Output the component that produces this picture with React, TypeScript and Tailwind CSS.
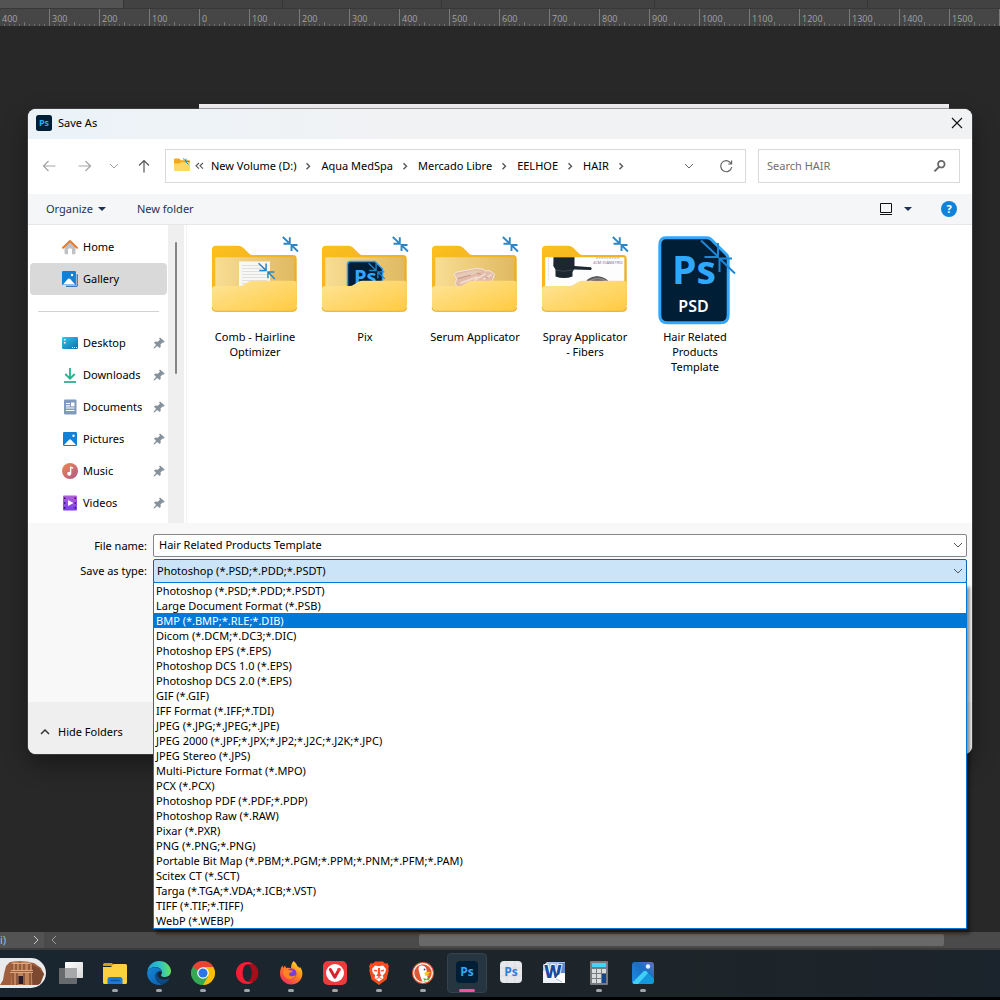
import React from "react";

const fileTypes = [
  "Photoshop (*.PSD;*.PDD;*.PSDT)",
  "Large Document Format (*.PSB)",
  "BMP (*.BMP;*.RLE;*.DIB)",
  "Dicom (*.DCM;*.DC3;*.DIC)",
  "Photoshop EPS (*.EPS)",
  "Photoshop DCS 1.0 (*.EPS)",
  "Photoshop DCS 2.0 (*.EPS)",
  "GIF (*.GIF)",
  "IFF Format (*.IFF;*.TDI)",
  "JPEG (*.JPG;*.JPEG;*.JPE)",
  "JPEG 2000 (*.JPF;*.JPX;*.JP2;*.J2C;*.J2K;*.JPC)",
  "JPEG Stereo (*.JPS)",
  "Multi-Picture Format (*.MPO)",
  "PCX (*.PCX)",
  "Photoshop PDF (*.PDF;*.PDP)",
  "Photoshop Raw (*.RAW)",
  "Pixar (*.PXR)",
  "PNG (*.PNG;*.PNG)",
  "Portable Bit Map (*.PBM;*.PGM;*.PPM;*.PNM;*.PFM;*.PAM)",
  "Scitex CT (*.SCT)",
  "Targa (*.TGA;*.VDA;*.ICB;*.VST)",
  "TIFF (*.TIF;*.TIFF)",
  "WebP (*.WEBP)",
];

const rulerLabels = [
  "400", "300", "200", "100", "0", "100", "200", "300", "400", "500", "600",
  "700", "800", "900", "1000", "1100", "1200", "1300", "1400", "1500", "",
];

const rulerTicks = [0, 1, 2, 3, 4, 5, 6, 7, 8, 9];

function Ruler() {
  return (
    <div className="-ml-px flex h-[17px] overflow-hidden bg-[#464646]">
      {rulerLabels.map((label, i) => (
        <div key={i} className="relative flex w-[50px] shrink-0 items-end border-l border-[#7a7a7a]">
          <span className="absolute top-[3px] left-[2px] font-['Open_Sans'] text-[9px] leading-[14px] text-[#a3a3a3]">
            {label}
          </span>
          {rulerTicks.map((t) => (
            <i
              key={t}
              className={
                t === 4
                  ? "ml-1 block h-1 w-px bg-[#757575]"
                  : t === 9
                    ? "hidden"
                    : "ml-1 block h-[2px] w-px bg-[#6c6c6c]"
              }
            />
          ))}
        </div>
      ))}
    </div>
  );
}

function Chevron({ className }: { className: string }) {
  return (
    <svg viewBox="0 0 10 10" className={className} fill="none" stroke="currentColor" aria-hidden="true">
      <path d="M1 3l4 4 4-4" />
    </svg>
  );
}

function Crumb({ children }: { children: string }) {
  return (
    <>
      <button type="button" className="whitespace-nowrap">
        {children}
      </button>
      <svg viewBox="0 0 25 12" className="h-3 w-[25px] shrink-0" fill="none" stroke="#555" strokeWidth="1.4" aria-hidden="true">
        <path d="M10.500 3.200l3 3-3 3" />
      </svg>
    </>
  );
}

function ShrinkArrows({ x, y, s, w = 1.8 }: { x: number; y: number; s: number; w?: number }) {
  return (
    <g transform={`translate(${x} ${y}) scale(${s})`} fill="none" stroke="#2a86c6" strokeWidth={w}>
      <path d="M.5.7l7 6.600M7.500.9v6.500H1.200" />
      <path d="M15.600 15.200L9.300 8.900M9.200 14.600V8.700h6" />
    </g>
  );
}

function Folder({ children }: { children?: React.ReactNode }) {
  const id = React.useId();
  return (
    <svg viewBox="0 0 96 96" className="size-24" aria-hidden="true">
      <defs>
        <linearGradient id={id + "b"} x1="0" y1="0" x2="1" y2="1">
          <stop offset="0" stopColor="#fcc01c" />
          <stop offset="1" stopColor="#e8a628" />
        </linearGradient>
        <linearGradient id={id + "p"} x1="0" y1="0" x2="1" y2="0">
          <stop offset="0" stopColor="#f8dd93" />
          <stop offset="1" stopColor="#e0b962" />
        </linearGradient>
        <linearGradient id={id + "f"} x1="0" y1="0" x2="1" y2="1">
          <stop offset="0" stopColor="#fee59a" />
          <stop offset="1" stopColor="#ffca3f" />
        </linearGradient>
      </defs>
      <path d="M5 16.500Q5 12.700 9 12.700H31Q34 12.700 36 14.500L42 20.500Q43.500 22 46 22H86Q89.700 22 89.700 26V72H5Z" fill={`url(#${id}b)`} />
      <rect x="8.300" y="24.300" width="79" height="40" rx="1" fill={`url(#${id}p)`} />
      {children}
      <path
        d="M5 56Q5 53 8 53H32Q35 53 37 51.500L41 49Q43 47.700 46 47.700H86.700Q89.700 47.700 89.700 51V74.700Q89.700 78.700 85.700 78.700H9Q5 78.700 5 74.700Z"
        fill={`url(#${id}f)`}
      />
      <path d="M5 74.500Q5.200 78.300 9 78.300H85.700Q89.500 78.300 89.700 74.500" fill="none" stroke="#dda52c" strokeWidth=".8" />
      <ShrinkArrows x={75.3} y={3.3} s={1} w={1.9} />
    </svg>
  );
}

function CombArt() {
  return (
    <g>
      <rect x="32" y="28.500" width="31" height="30" fill="#f7f7f6" />
      <path d="M35 32.500h18M35 35.500h20M35 38.500h23M35 41.500h25M35 44.500h25M35 47.500h25M35 50.500h12" stroke="#e0e0e0" strokeWidth="1" />
      <ShrinkArrows x={51} y={29.5} s={1.08} w={1.4} />
    </g>
  );
}

function PixArt() {
  return (
    <g>
      <path d="M30.500 60V31.500Q30.500 28.500 33.500 28.500H58L65.500 36V60Z" fill="#001e36" stroke="#2f9df7" strokeWidth="1.500" />
      <text x="37" y="51" fill="#31a8ff" fontFamily="Open Sans, sans-serif" fontWeight="700" fontSize="20">
        Ps
      </text>
      <ShrinkArrows x={51} y={29.5} s={1.08} w={1.2} />
    </g>
  );
}

function SerumArt() {
  return (
    <g>
      <path d="M27 41L30 39 49 35.500 56 36 58 38 62 37.500 67.500 41 66 46 63 50 31 56 28 50 30 46Z" fill="#e2bca8" stroke="#f3e6dd" strokeWidth="1" strokeLinejoin="round" />
      <path d="M28.500 42L47 37.500 54 38 45 42 31 45Z" fill="#e6cbba" />
      <path d="M34 50L50 44M48 47L58 41M57 46L64 42" stroke="#efdacd" strokeWidth="2" strokeLinecap="round" />
      <path d="M31 45.500L44 42M50 40l4 1.500M58 44l3 1" stroke="#c39180" strokeWidth=".9" />
    </g>
  );
}

function SprayArt() {
  return (
    <g>
      <rect x="8.300" y="24.300" width="79" height="40" fill="#fdfdfd" />
      <path d="M16.500 24.300H37.500V33L54 34.200Q55.500 35.500 54 37L37 36.500L35.500 39V43.500Q27 46.500 18.500 43.500V36.500L16.300 33Z" fill="#1c2730" />
      <path d="M18.500 37Q26 39.500 35 37" fill="none" stroke="#42515c" strokeWidth=".8" />
      <path d="M46 54Q49 43.500 60 43Q71 43.500 75 54Z" fill="#5a5b5d" />
      <path d="M50 50Q60 42 71 49" fill="none" stroke="#8d8d8f" strokeWidth="1.200" />
      <path d="M11.500 25v22" stroke="#c4c4c4" strokeWidth=".6" strokeDasharray="1.500 1" />
      <text x="56" y="30.500" fill="#6d6d6d" fontFamily="Open Sans, sans-serif" fontSize="4">
        4CM DIÁMETRO
      </text>
      <path d="M59 25h24" stroke="#a5a5a5" strokeWidth=".8" strokeDasharray="2 .6" />
    </g>
  );
}

function PsdIcon() {
  return (
    <svg viewBox="0 0 96 96" className="size-24" aria-hidden="true">
      <path
        d="M19 4.800H60Q62.500 4.800 64.500 6.800L79.500 21.500Q81.200 23.300 81.200 26V82Q81.200 89.800 73.500 89.800H20.500Q12.800 89.800 12.800 82V12Q12.800 4.800 19 4.800Z"
        fill="#001e36"
        stroke="#31a8ff"
        strokeWidth="3"
      />
      <text x="25" y="51" fill="#31a8ff" fontFamily="Open Sans, sans-serif" fontWeight="700" fontSize="39">
        Ps
      </text>
      <text x="46.500" y="78.500" textAnchor="middle" fill="#fff" fontFamily="Noto Sans, sans-serif" fontWeight="600" fontSize="16">
        PSD
      </text>
      <g fill="none" stroke="#1f86d6" strokeWidth="2">
        <path d="M54 7.500L71 23.500M71 10V24H57.500" />
        <path d="M88 40.500L73 26M72.500 39V25.500H85" />
      </g>
    </svg>
  );
}

const files = [
  { name: "Comb - Hairline Optimizer", icon: <Folder><CombArt /></Folder> },
  { name: "Pix", icon: <Folder><PixArt /></Folder> },
  { name: "Serum Applicator", icon: <Folder><SerumArt /></Folder> },
  { name: "Spray Applicator\n- Fibers", icon: <Folder><SprayArt /></Folder> },
  { name: "Hair Related Products Template", icon: <PsdIcon /> },
];

const icon16 = "size-4 shrink-0";

const HomeIcon = (
  <svg viewBox="0 0 16 16" className={icon16} aria-hidden="true">
    <path d="M2.500 7.500L8 2.500l5.500 5V14a1.200 1.200 0 0 1-1.200 1.200H10V10.500Q10 9.500 9 9.500H7Q6 9.500 6 10.500v4.700H3.700A1.200 1.200 0 0 1 2.500 14Z" fill="#bfc1c4" />
    <path d="M1 8.800L8 2l7 6.800" fill="none" stroke="#ee7a21" strokeWidth="1.900" strokeLinecap="round" strokeLinejoin="round" />
  </svg>
);
const GalleryIcon = (
  <svg viewBox="0 0 16 16" className={icon16} aria-hidden="true">
    <path d="M3 3h11.500q1.200 0 1.200 1.200V14.500q0 1.200-1.200 1.200H4z" fill="#0b5fae" />
    <rect width="14" height="14" rx="1.200" fill="#1181d8" />
    <path d="M1 13.500L6 7.800Q7 7 8 7.800L13.200 13.500Z" fill="#fff" />
    <circle cx="10" cy="4" r="1.200" fill="#fff" />
    <path d="M14.400 3v11.400H3" fill="none" stroke="#eee" strokeWidth=".7" />
  </svg>
);
const DesktopIcon = (
  <svg viewBox="0 0 16 16" className={icon16} aria-hidden="true">
    <defs>
      <linearGradient id="desk" x1="0" y1="0" x2="1" y2="1">
        <stop offset="0" stopColor="#35c8ee" />
        <stop offset="1" stopColor="#0c6ea8" />
      </linearGradient>
    </defs>
    <rect y="2" width="16" height="12" rx="1.200" fill="url(#desk)" />
    <path d="M2 4h1.500v1.500H2zM2 7h1.500v1.500H2zM10 12h1v1h-1zM12 12h1v1h-1zM14 12h1v1h-1z" fill="#fff" />
  </svg>
);
const DownloadIcon = (
  <svg viewBox="0 0 16 16" className={icon16} fill="none" aria-hidden="true">
    <path d="M8 1v10.500M3.300 7L8 11.700 12.700 7" stroke="#1fb58c" strokeWidth="1.800" />
    <path d="M2 15h12" stroke="#14a584" strokeWidth="1.600" />
  </svg>
);
const DocumentIcon = (
  <svg viewBox="0 0 16 16" className={icon16} aria-hidden="true">
    <rect x="2" y=".5" width="12.500" height="15" rx="1" fill="#7f9aba" />
    <path d="M4 4.500h4M4 6.800h4M4 9h8.500M4 11.500h8.500" stroke="#fff" strokeWidth="1.200" />
    <rect x="9" y="3.500" width="3.500" height="3.800" fill="#fff" />
  </svg>
);
const PictureIcon = (
  <svg viewBox="0 0 16 16" className={icon16} aria-hidden="true">
    <rect x="1" y="1" width="14" height="14" rx="1.200" fill="#1181d8" />
    <path d="M2 14L7 8.700Q8 8 9 8.700L14 14Z" fill="#fff" />
    <circle cx="11.500" cy="4.700" r="1.200" fill="#fff" />
  </svg>
);
const MusicIcon = (
  <svg viewBox="0 0 16 16" className={icon16} aria-hidden="true">
    <defs>
      <linearGradient id="mus" x1="0" y1="0" x2="1" y2="1">
        <stop offset="0" stopColor="#ef8a50" />
        <stop offset="1" stopColor="#b0558d" />
      </linearGradient>
    </defs>
    <circle cx="8" cy="8" r="8" fill="url(#mus)" />
    <path d="M8.600 3.500V10.500M8.600 4.200l2.600 1" stroke="#fff" strokeWidth="1.400" />
    <circle cx="7.200" cy="10.700" r="2" fill="#fff" />
  </svg>
);
const VideoIcon = (
  <svg viewBox="0 0 16 16" className={icon16} aria-hidden="true">
    <defs>
      <linearGradient id="vid" x1="0" y1="0" x2="0" y2="1">
        <stop offset="0" stopColor="#b062d8" />
        <stop offset="1" stopColor="#7b3ff0" />
      </linearGradient>
    </defs>
    <rect x="1" y=".5" width="14" height="15" rx="1" fill="url(#vid)" />
    <path d="M2 2.500h1.500V4H2zM2 7.200h1.500v1.500H2zM2 12h1.500v1.500H2zM12.500 2.500H14V4h-1.500zM12.500 7.200H14v1.500h-1.500zM12.500 12H14v1.500h-1.500z" fill="#2f1560" />
    <path d="M6 5l5.500 3L6 11z" fill="#fff" />
  </svg>
);

function Pin() {
  return (
    <svg viewBox="0 0 12 12" className="size-3 shrink-0" aria-hidden="true">
      <path d="M7 .5l4.700 4-1.100 1.200-1-.2L7.500 7.500l.3 2.300-1.200 1.100L4.300 8.900 1 11.700.4 11.100 3.100 7.700 1 5.700l1.100-1.100 2.600.1L7 2.700 6 1.600Z" fill="#87939c" />
    </svg>
  );
}

const pinned = [
  { name: "Desktop", icon: DesktopIcon },
  { name: "Downloads", icon: DownloadIcon },
  { name: "Documents", icon: DocumentIcon },
  { name: "Pictures", icon: PictureIcon },
  { name: "Music", icon: MusicIcon },
  { name: "Videos", icon: VideoIcon },
];

function SaveDialog() {
  return (
    <section
      role="dialog"
      aria-label="Save As"
      className="relative mx-7 mt-[83px] rounded-lg bg-white text-[11px] leading-4 text-black shadow-[0_0_0_1px_#55555588,0_10px_24px_#00000066]"
    >
      <header className="flex h-[30px] items-center rounded-t-lg bg-linear-to-r from-[#ebf3f8] to-[#f1f2f4] to-40% pr-[7px] pb-0.5 pl-2">
        <svg viewBox="0 0 16 16" className="size-4" aria-hidden="true">
          <rect width="16" height="16" rx="2.500" fill="#001e36" />
          <text x="8" y="11" textAnchor="middle" fill="#31a8ff" fontFamily="Open Sans, sans-serif" fontWeight="700" fontSize="9">
            Ps
          </text>
        </svg>
        <h1 className="ml-1.5">Save As</h1>
        <button type="button" aria-label="Close" className="ml-auto flex size-4 items-center justify-center">
          <svg viewBox="0 0 12 12" className="size-3" stroke="#111" strokeWidth="1.100" aria-hidden="true">
            <path d="M1 1l10 10M11 1L1 11" />
          </svg>
        </button>
      </header>

      <nav className="flex h-[55px] items-center pr-3 pb-0.5 pl-3.5" aria-label="Location">
        <button type="button" aria-label="Back" className="mr-[22px] text-[#a5a5a5]">
          <svg viewBox="0 0 14 14" className="size-3.5" fill="none" stroke="currentColor" strokeWidth="1.200">
            <path d="M13.500 7H1.500M6.500 2L1.500 7l5 5" />
          </svg>
        </button>
        <button type="button" aria-label="Forward" className="mr-[17px] text-[#a5a5a5]">
          <svg viewBox="0 0 14 14" className="size-3.5" fill="none" stroke="currentColor" strokeWidth="1.200">
            <path d="M.5 7h12M7.500 2l5 5-5 5" />
          </svg>
        </button>
        <button type="button" aria-label="Recent locations" className="mr-[18px] text-[#a0a0a0]">
          <Chevron className="size-2.5" />
        </button>
        <button type="button" aria-label="Up" className="mr-3.5 text-[#555]">
          <svg viewBox="0 0 14 14" className="size-3.5" fill="none" stroke="currentColor" strokeWidth="1.200">
            <path d="M7 13.500V1.500M2 6.500l5-5 5 5" />
          </svg>
        </button>
        <div className="mr-3 flex h-[34px] flex-1 items-center border border-[#d9d9d9] pr-3 pl-2">
          <svg viewBox="0 0 16 16" className="size-4 shrink-0" aria-hidden="true">
            <path d="M0 1.500Q0 .5 1 .5H5L7 2.200H15Q16 2.200 16 3.200V11H0Z" fill="#efab1d" />
            <path d="M0 5.500H5.500L7 4.200H16V12Q16 13 15 13H1Q0 13 0 12Z" fill="#ffd763" />
            <path d="M9 .5l3 2.500M12 .5v3M11.500 3.500l3 3M15 3.500h-3.200" stroke="#2b8fcb" />
          </svg>
          <svg viewBox="0 0 12 12" className="mr-[5px] ml-1 size-3 shrink-0" fill="none" stroke="#555" strokeWidth="1.100" aria-hidden="true">
            <path d="M5 3L2 5.800l3 2.800M9 3L6 5.800l3 2.800" />
          </svg>
          <Crumb>New Volume (D:)</Crumb>
          <Crumb>Aqua MedSpa</Crumb>
          <Crumb>Mercado Libre</Crumb>
          <Crumb>EELHOE</Crumb>
          <Crumb>HAIR</Crumb>
          <button type="button" aria-label="Previous locations" className="mr-[25px] ml-auto text-[#666]">
            <Chevron className="size-2.5" />
          </button>
          <button type="button" aria-label="Refresh">
            <svg viewBox="0 0 14 14" className="size-3.5" fill="none" stroke="#666" strokeWidth="1.200">
              <path d="M12.300 5A5.500 5.500 0 1 0 12.700 8M12.600 1.500V5H9.200" />
            </svg>
          </button>
        </div>
        <div className="flex h-[34px] w-[202px] items-center border border-[#d9d9d9] px-2">
          <input aria-label="Search HAIR" placeholder="Search HAIR" className="min-w-0 flex-1 outline-none placeholder:text-[#6f6f6f]" />
          <svg viewBox="0 0 14 14" className="mr-1 size-3.5 shrink-0" fill="none" stroke="#666" aria-hidden="true">
            <circle cx="8.300" cy="5.200" r="3.300" strokeWidth="1.700" />
            <path d="M6 7.800L1.500 12.300" strokeWidth="1.900" />
          </svg>
        </div>
      </nav>

      <div className="flex h-[31px] items-center border-b border-[#e6e7e8] bg-[#f5f6f7] pr-[15px] pl-[18px] text-[#1c3357]">
        <button type="button" className="flex items-center">
          Organize
          <svg viewBox="0 0 8 4" className="ml-[5px] h-1 w-2" fill="currentColor" aria-hidden="true">
            <path d="M0 0h8L4 4z" />
          </svg>
        </button>
        <button type="button" className="ml-[31px]">New folder</button>
        <button type="button" aria-label="Change view" className="ml-auto flex items-center">
          <svg viewBox="0 0 12 12" className="size-3" fill="none" stroke="#111" aria-hidden="true">
            <path d="M.5.500h11v9H.5zM0 11.500h12" />
          </svg>
          <svg viewBox="0 0 8 4" className="ml-3 h-1 w-2" fill="currentColor" aria-hidden="true">
            <path d="M0 0h8L4 4z" />
          </svg>
        </button>
        <button type="button" aria-label="Help" className="ml-[29px] flex size-4 items-center justify-center rounded-full bg-[#0d83dc] leading-4 font-bold text-white">
          ?
        </button>
      </div>

      <div className="flex">
        <aside className="flex w-[140px] shrink-0 flex-col pt-1.5 pr-px pb-1 pl-0.5">
          <button type="button" className="flex h-8 items-center gap-[5px] rounded-sm pl-8">
            {HomeIcon}
            Home
          </button>
          <button type="button" className="flex h-8 items-center gap-[5px] rounded-sm bg-[#d9d9d9] pl-8">
            {GalleryIcon}
            Gallery
          </button>
          <hr className="mt-4 mr-2 -mb-px ml-2 border-[#d2d2d2] pb-4" />
          {pinned.map((p) => (
            <button key={p.name} type="button" className="flex h-8 items-center gap-[5px] rounded-sm pr-0.5 pl-8">
              {p.icon}
              <span className="mr-auto">{p.name}</span>
              <Pin />
            </button>
          ))}
        </aside>
        <div className="w-4 shrink-0 bg-[#efefef] pt-[17px]">
          <div className="ml-[7px] h-[132px] w-0.5 rounded-full bg-[#858585]" />
        </div>
        <ul className="ml-0.5 flex flex-1 items-start border-l border-[#f3f3f3] pt-2 pl-[13px]">
          {files.map((f) => (
            <li key={f.name} className="w-[110px]">
              <button type="button" className="flex w-full flex-col items-center">
                {f.icon}
                <span className="px-2 leading-[15px] whitespace-pre-line">{f.name}</span>
              </button>
            </li>
          ))}
        </ul>
      </div>

      <form className="grid grid-cols-[119px_1fr] items-center gap-x-1.5 gap-y-0.5 bg-[#f8f8f8] pt-[11px] pr-[5px] pb-[119px]">
        <label htmlFor="file-name" className="text-right">File name:</label>
        <div className="relative">
          <input
            id="file-name"
            defaultValue="Hair Related Products Template"
            className="block h-[23px] w-full rounded-xs border border-[#868686] bg-white px-[5px] pb-0.5 outline-none"
          />
          <Chevron className="pointer-events-none absolute top-1.5 right-1 size-2.5 text-[#555]" />
        </div>
        <label htmlFor="file-type" className="text-right">Save as type:</label>
        <div className="relative">
          <select
            id="file-type"
            className="block h-6 w-full appearance-none rounded-xs border border-[#0a63b5] bg-[#cce4f7] px-[3px] outline-none"
          >
            {fileTypes.map((t) => (
              <option key={t}>{t}</option>
            ))}
          </select>
          <Chevron className="pointer-events-none absolute top-[7px] right-1 size-2.5 text-[#555]" />
          <ul
            role="listbox"
            aria-label="Save as type"
            className="absolute inset-x-0 top-[23px] z-10 border border-[#0078d7] bg-white shadow-[3px_5px_3px_#00000066]"
          >
            {fileTypes.map((t) => {
              const active = t.startsWith("BMP");
              return (
                <li
                  key={t}
                  role="option"
                  aria-selected={active}
                  className={active ? "bg-[#0078d7] px-0.5 leading-[15px] text-white" : "px-0.5 leading-[15px]"}
                >
                  {t}
                </li>
              );
            })}
          </ul>
        </div>
      </form>

      <footer className="flex h-[52px] items-center rounded-b-lg bg-[#efefef] pt-2 pl-3">
        <button type="button" className="flex items-center gap-2">
          <Chevron className="size-2.5 rotate-180 stroke-[1.500px] text-[#333]" />
          Hide Folders
        </button>
      </footer>
    </section>
  );
}

const t24 = "size-6";

function PsTile({ light }: { light?: boolean }) {
  return (
    <svg viewBox="0 0 24 24" className={t24}>
      <rect x="1" y="0" width="22" height="22" rx="4" fill={light ? "#e6e8ec" : "#001e36"} />
      {light && <path d="M1 7h22M1 15h22M8 0v22M16 0v22" stroke="#d2d6de" strokeWidth=".7" />}
      <text
        x="12"
        y="15"
        textAnchor="middle"
        fill={light ? "#2b7fe0" : "#31a8ff"}
        fontFamily="Open Sans, sans-serif"
        fontWeight="700"
        fontSize="12"
      >
        Ps
      </text>
    </svg>
  );
}

const apps = [
  {
    name: "Task View",
    running: false,
    icon: (
      <svg viewBox="0 0 24 24" className={t24}>
        <defs>
          <linearGradient id="tv" x1="0" y1="0" x2="1" y2="1">
            <stop offset="0" stopColor="#fff" />
            <stop offset="1" stopColor="#d9d9d9" />
          </linearGradient>
        </defs>
        <rect x="6" y="1" width="18" height="16" rx=".7" fill="url(#tv)" />
        <rect y="7" width="18" height="16" rx=".7" fill="#686b6e" />
        <path d="M6 7h12v10H6z" fill="#a6a8aa" />
      </svg>
    ),
  },
  {
    name: "File Explorer",
    running: true,
    icon: (
      <svg viewBox="0 0 24 24" className={t24}>
        <path d="M0 3.500Q0 2 1.500 2H9l2.500 3H0Z" fill="#d99a12" />
        <path d="M0 6H8L10.500 3H22.500Q24 3 24 4.500V21.500Q24 23 22.500 23H1.500Q0 23 0 21.500Z" fill="#fcd03f" />
        <path d="M4.500 23V18.500Q4.500 16 7 16H17Q19.500 16 19.500 18.500V23Z" fill="#1a7bd0" />
        <path d="M7.500 19.500h9" stroke="#0a559e" strokeWidth="1.200" />
      </svg>
    ),
  },
  {
    name: "Edge",
    running: true,
    icon: (
      <svg viewBox="0 0 24 24" className={t24}>
        <defs>
          <linearGradient id="edg" x1="0" y1=".5" x2="1" y2=".4">
            <stop offset="0" stopColor="#1c9fde" />
            <stop offset=".55" stopColor="#2cc3c9" />
            <stop offset="1" stopColor="#6ee052" />
          </linearGradient>
          <linearGradient id="edb" x1="0" y1="0" x2="1" y2="1">
            <stop offset="0" stopColor="#148ad8" />
            <stop offset="1" stopColor="#0c5aa8" />
          </linearGradient>
        </defs>
        <path d="M.3 10.500C1.200 4.500 6 0 12 0c7 0 12 5 12 10.300 0 3.500-2.700 5.700-6 5.700-2.400 0-4-.8-4-1.800 0-.7 1-1.200 1-3C15 8.500 12 6 8.300 6 4 6 1.400 8.500.3 10.500Z" fill="url(#edg)" />
        <path d="M.2 10.700C2 7.500 5 6.200 8.200 6.200c3.700 0 6.400 2.200 6.600 4.500C13.500 9.500 9 10 8.500 14.500c-.4 4.500 3.500 8.500 8 8.400C15 23.700 13.500 24 12 24 5 24-.6 18 .2 10.700Z" fill="url(#edb)" />
        <path d="M8.600 13.500C8 18.500 12 23.500 17 22.700c2.300-1 4.200-2.800 5.200-4.500.2-.4-.2-.8-.6-.6-5 2.300-11 .3-11-4.100 0-1 .5-2 1.500-2.700-2 .2-3.300 1.200-3.500 2.700Z" fill="#0b4a87" />
      </svg>
    ),
  },
  {
    name: "Chrome",
    running: true,
    icon: (
      <svg viewBox="0 0 24 24" className={t24}>
        <path d="M12 12L1.600 6A12 12 0 0 1 22.400 6Z" fill="#ea4335" />
        <path d="M12 12L22.400 6A12 12 0 0 1 12 24Z" fill="#fbbc05" />
        <path d="M12 12V24A12 12 0 0 1 1.600 6Z" fill="#34a853" />
        <path d="M12 6H22.400L17.200 15Z" fill="#fbbc05" />
        <path d="M17.200 15L12 24L6.800 15Z" fill="#34a853" />
        <path d="M6.800 15L1.600 6L12 6Z" fill="#34a853" />
        <path d="M1.600 6A12 12 0 0 1 22.400 6H12L6.800 9Z" fill="#ea4335" />
        <circle cx="12" cy="12" r="5.800" fill="#fff" />
        <circle cx="12" cy="12" r="4.600" fill="#2a76e8" />
      </svg>
    ),
  },
  {
    name: "Opera",
    running: true,
    icon: (
      <svg viewBox="0 0 24 24" className={t24}>
        <ellipse cx="14" cy="12" rx="9.500" ry="10.300" fill="#a80d1b" />
        <path fillRule="evenodd" d="M12 1C5.500 1 1 6 1 12s4.500 11 11 11c2.500 0 4.500-.6 6-1.800-5 .8-9.800-2-9.800-9.200S13 2 18 2.800C16.500 1.600 14.500 1 12 1Z" fill="#f21e33" />
        <ellipse cx="12.200" cy="12" rx="4.600" ry="8.400" fill="#1a2833" />
      </svg>
    ),
  },
  {
    name: "Firefox",
    running: true,
    icon: (
      <svg viewBox="0 0 24 24" className={t24}>
        <defs>
          <linearGradient id="ffx" x1=".9" y1="0" x2=".2" y2="1">
            <stop offset="0" stopColor="#ffe234" />
            <stop offset=".45" stopColor="#ff8a1e" />
            <stop offset="1" stopColor="#f0265e" />
          </linearGradient>
        </defs>
        <path d="M14.500 0c2 1.500 3.500 3.500 3.900 5.300 1 .2 1.600.9 1.800 1.700l.9-.9C23 9 23.700 11 23.300 14 22.600 19.500 18 23.500 12.300 23.500 6 23.500 1 18.500 1 12.500 1 9 2 6.500 3.500 4.500L4.200 7 6 4.500 7 7c2-.5 4-.3 5 .5C12 5 12.500 2 14.500 0Z" fill="url(#ffx)" />
        <circle cx="12.300" cy="12.500" r="5.200" fill="#7a3fd6" />
        <path d="M4 10c2-1.500 4-2 6.500-1 1.200.5 2.200.7 3.500.7-.7 1.500-2.600 1.500-3.600 2.500-1 1 0 3 2 3 2 .1 3-1 4.500-.7C15.500 17 13 18.300 10.500 18 6.500 17.500 4 14 4 10Z" fill="#ff8522" />
      </svg>
    ),
  },
  {
    name: "Vivaldi",
    running: true,
    icon: (
      <svg viewBox="0 0 24 24" className={t24}>
        <rect width="24" height="24" rx="5" fill="#ee3a3c" />
        <circle cx="12" cy="12" r="9" fill="#fff" />
        <path d="M7.300 8.500L11.800 16.300L15.500 9.500" fill="none" stroke="#d8232f" strokeWidth="3" strokeLinecap="round" strokeLinejoin="round" />
        <circle cx="16" cy="8.600" r="1.900" fill="#ee3a3c" />
      </svg>
    ),
  },
  {
    name: "Brave",
    running: true,
    icon: (
      <svg viewBox="0 0 24 24" className={t24}>
        <path d="M8 .5h8l2 2 2.500-.2L22 5.500l-.7 1.800.4 2.200L19.500 18.500 12 24 4.500 18.500 2.300 9.500l.4-2.200L2 5.500 3.500 2.300 6 2.500Z" fill="#fb4a1e" />
        <path d="M8 4.500l4 .8 4-.8 3 3.500-.7 3.500-2.500 3 .7 2.500-4.500 3.500-4.500-3.500.7-2.500-2.500-3L5 8Z" fill="#fff" />
        <path d="M6.800 8.500l3.500.7-.5 1.300-2.500-.3ZM17.200 8.500l-3.500.7.5 1.300 2.500-.3ZM11 7h2l.3 6 1.500 1.500L12 16l-2.800-1.500L10.700 13Z" fill="#f6502a" />
        <path d="M9.500 17.500L12 16.500l2.500 1" stroke="#f6502a" fill="none" strokeWidth=".9" />
      </svg>
    ),
  },
  {
    name: "DuckDuckGo",
    running: true,
    icon: (
      <svg viewBox="0 0 24 24" className={t24}>
        <circle cx="12" cy="12" r="11" fill="#de5833" />
        <circle cx="12" cy="12" r="9.300" fill="none" stroke="#fff" strokeWidth="1.200" />
        <path d="M8 5.500C10 3.500 15 4.500 15.500 8.500L16 13l1 6.500-5.500 1.300C9.500 17 8.200 11 7.500 8Z" fill="#fff" />
        <path d="M13.500 11.500c2-1 5-1 6-.2.500.8-2 1.500-3.500 2l3 .5c-.5 1.200-3.500 1.500-5 .7Z" fill="#fdc629" />
        <circle cx="13.500" cy="8.500" r=".9" fill="#2d4f8e" />
        <path d="M12.500 17l3 1 2.500-1.500.5 3-3-.7-2.500 1Z" fill="#4cba3c" />
      </svg>
    ),
  },
  { name: "Photoshop", running: true, active: true, icon: <PsTile /> },
  { name: "Photoshop Beta", running: false, icon: <PsTile light /> },
  {
    name: "Word",
    running: false,
    icon: (
      <svg viewBox="0 0 24 24" className={t24}>
        <path d="M4 1h18v21H0V5Z" fill="#edf2fa" />
        <path d="M0 6L5 1H22V6L0 10Z" fill="#a9c4ea" />
        <path d="M16 2h6v10h-6z" fill="#5b8bd3" />
        <text x="1" y="17" fill="#174a9c" stroke="#fff" strokeWidth="1.500" paintOrder="stroke" fontFamily="Open Sans, sans-serif" fontWeight="800" fontSize="17">
          W
        </text>
        <path d="M15 14l7-2v10h-6l-4-4Z" fill="#fff" />
        <path d="M13 18l6 3" stroke="#9ebbe6" />
      </svg>
    ),
  },
  {
    name: "Calculator",
    running: true,
    icon: (
      <svg viewBox="0 0 24 24" className={t24}>
        <rect x="3" width="18" height="24" rx="1" fill="#777b7e" />
        <rect x="5" y="2" width="14" height="4" fill="#46d3f4" />
        <path d="M5 8h4v4H5zM10 8h4v4h-4zM15 8h4v4h-4zM5 13h4v4H5zM10 13h4v4h-4zM5 18h4v4H5zM10 18h4v4h-4z" fill="#d9dcde" />
        <path d="M15 13h4v9h-4z" fill="#12468f" />
      </svg>
    ),
  },
  {
    name: "Photos",
    running: true,
    icon: (
      <svg viewBox="0 0 24 24" className={t24}>
        <defs>
          <linearGradient id="pho" x1="0" y1="1" x2="1" y2="0">
            <stop offset="0" stopColor="#1b8be6" />
            <stop offset=".6" stopColor="#1b6fc4" />
            <stop offset="1" stopColor="#6a6fc0" />
          </linearGradient>
        </defs>
        <rect x="1" y="1" width="22" height="22" rx="3" fill="url(#pho)" />
        <path d="M2 22L12.500 10.500Q14 9 15.500 10.500L23 18V20Q23 23 20 23H4Q2.500 23 2 22Z" fill="#1597e0" />
        <path d="M1.500 21.500L12.500 10.500Q14 9 15.500 10.500L17 12L7 23H4Q2 23 1.500 21.500Z" fill="#41d0f5" />
        <circle cx="17" cy="5.500" r="2.200" fill="#e9f3fc" />
      </svg>
    ),
  },
];

function Taskbar() {
  return (
    <nav aria-label="Taskbar" className="flex h-[50px] border-b-3 border-black bg-linear-to-r from-[#192530] via-[#1e2529] via-70% to-[#1b232c]">
      <button type="button" aria-label="Search highlights" className="mt-2 mr-[3px] flex h-[30px] w-[46px] justify-end overflow-hidden rounded-r-full bg-[#e9eaec] pr-0.5">
        <svg viewBox="0 0 44 30" className="h-[30px] w-11">
          <path d="M0 27L3 22 4 16 6 8 10 4 20 3 34 5 41 10 44 16 41 24 38 27Z" fill="#9f5f3c" />
          <path d="M30 6L39 10 44 16 40 26 33 27Z" fill="#7c4930" />
          <path d="M11 5L14 3.500H28L32 6V12H11ZM12 14H32V27H11Z" fill="#c2825a" />
          <path d="M12 6v6M16 5v7M20 4v8M24 5v7M29 6v6M13 15v12M17 15v12M24 15v12M30 15v12" stroke="#7b452d" strokeWidth="1.300" />
          <path d="M11 12.500H33M10 14.500H33M13 5.500H30" stroke="#e0aa80" />
          <path d="M18.500 18h4.500v8h-4.500z" fill="#2b1c2c" />
        </svg>
      </button>
      {apps.map((a) => (
        <button
          key={a.name}
          type="button"
          aria-label={a.name}
          className={
            a.active
              ? "mx-0.5 mt-[3px] flex h-10 w-10 flex-col items-center rounded-sm border border-[#33424d] bg-[#263540] pt-[7px]"
              : "mx-0.5 mt-[3px] flex h-10 w-10 flex-col items-center pt-2"
          }
        >
          {a.icon}
          {a.running && (
            <span
              className={
                a.active ? "mt-1 h-[3px] w-4 rounded-full bg-[#f553a0]" : "mt-1 h-[3px] w-1.5 rounded-full bg-[#a0a5a8]"
              }
            />
          )}
        </button>
      ))}
    </nav>
  );
}

export default function App() {
  return (
    <div className="flex min-h-screen flex-col overflow-hidden bg-[#282828] font-['Noto_Sans','Open_Sans',sans-serif]">
      <div className="flex h-[9px] border-b border-[#383838] bg-[#424242]">
        <div className="w-[124px] border-r border-[#363636] bg-[#535353]" />
        <div className="w-[159px] border-r border-[#363636]" />
        <div className="w-[159px] border-r border-[#363636]" />
        <div className="w-[213px] border-r border-[#363636]" />
        <div className="w-[213px] border-r border-[#363636]" />
      </div>
      <Ruler />
      <main className="relative flex-1">
        <div className="absolute top-[78px] right-[51px] left-[199px] h-[600px] bg-[#f8f6f8]" />
        <SaveDialog />
      </main>
      <div className="flex h-[18px] items-stretch border-b-2 border-[#3b3b3b] bg-[#4a4a4a] text-[11px] leading-4 text-[#c8c8c8]">
        <div className="flex w-11 items-center bg-[#535353]">
          <span className="text-[#8ec1e6]">i)</span>
          <Chevron className="mr-[3px] ml-auto size-2.5 -rotate-90" />
        </div>
        <Chevron className="ml-[5px] size-2.5 self-center rotate-90 text-[#999]" />
        <div className="my-0.5 mr-14 ml-[360px] flex-1 rounded-xs bg-[#696969]" />
      </div>
      <Taskbar />
    </div>
  );
}
